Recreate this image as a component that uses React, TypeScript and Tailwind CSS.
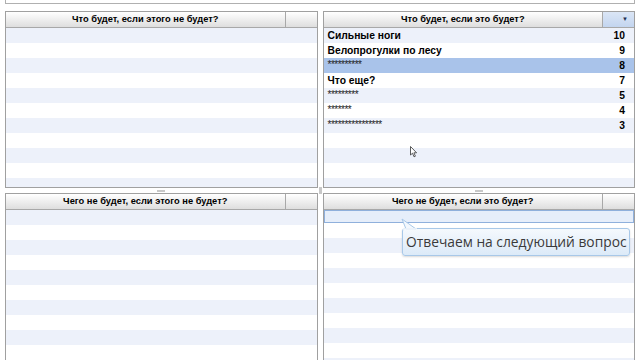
import React from "react";

const rowsTop = [
  { t: "Сильные ноги", n: "10", bold: true },
  { t: "Велопрогулки по лесу", n: "9", bold: true },
  { t: "**********", n: "8", bold: false, sel: true },
  { t: "Что еще?", n: "7", bold: true },
  { t: "*********", n: "5", bold: false },
  { t: "*******", n: "4", bold: false },
  { t: "****************", n: "3", bold: false },
];

function Header({ title, active }: { title: string; active?: boolean }) {
  return (
    <div className="flex h-[16px] shrink-0 border-b border-[#a8a8a8] bg-gradient-to-b from-[#ffffff] to-[#dedede]">
      <div className="flex flex-1 items-center justify-center border-r border-[#a8a8a8] text-[9.3px] font-bold text-black">
        {title}
      </div>
      {active ? (
        <div className="flex w-[31px] items-center justify-end pr-[6px] bg-gradient-to-b from-[#dbe6f6] to-[#c3d5ef] text-[6px] text-[#203050]">
          ▼
        </div>
      ) : (
        <div className="w-[31px]" />
      )}
    </div>
  );
}

function Stripes({ count, start = 0 }: { count: number; start?: number }) {
  return (
    <>
      {Array.from({ length: count }).map((_, i) => (
        <div
          key={i}
          className={`h-[15px] shrink-0 ${(i + start) % 2 === 0 ? "bg-[#edf1fa]" : "bg-white"}`}
        />
      ))}
    </>
  );
}

function Panel({ children }: { children: React.ReactNode }) {
  return (
    <div className="flex flex-1 flex-col overflow-hidden border border-[#a0a0a0] bg-white">{children}</div>
  );
}

export default function App() {
  return (
    <div
      className="relative h-[360px] w-[640px] overflow-hidden bg-white"
      style={{ fontFamily: '"Liberation Sans", Arial, sans-serif' }}
    >
      <div className="mx-[5px] h-[4px] border-x border-b border-[#b0b0b0]" />
      <div className="flex h-[356px] flex-col pl-[5px] pr-[5px] pt-[7px]">
        {/* top row */}
        <div className="flex h-[177px] shrink-0">
          <Panel>
            <Header title="Что будет, если этого не будет?" />
            <Stripes count={12} />
          </Panel>
          <div className="relative w-[5px] shrink-0" />
          <Panel>
            <Header title="Что будет, если это будет?" active />
            {rowsTop.map((r, i) => (
              <div
                key={i}
                className={`flex h-[15px] shrink-0 items-center justify-between pl-[4px] pr-[9px] text-[10.3px] font-bold text-black ${
                  r.sel ? "bg-[#a9c3ea]" : i % 2 === 0 ? "bg-[#edf1fa]" : "bg-white"
                }`}
              >
                <span className={r.bold ? "" : "-mt-[3px] text-[10px] font-normal tracking-[-0.5px] text-[#222]"}>{r.t}</span>
                <span>{r.n}</span>
              </div>
            ))}
            <Stripes count={5} start={1} />
          </Panel>
        </div>
        {/* splitter */}
        <div className="relative flex h-[5px] shrink-0">
          <div className="flex flex-1 items-center justify-center">
            <div className="h-[2px] w-[8px] border-y border-[#c8c8c8]" />
          </div>
          <div className="flex w-[5px] items-center justify-center">
            <div className="h-[7px] w-[3px] bg-[#c8c8c8]" />
          </div>
          <div className="flex flex-1 items-center justify-center">
            <div className="h-[2px] w-[8px] border-y border-[#c8c8c8]" />
          </div>
        </div>
        {/* bottom row */}
        <div className="flex flex-1">
          <Panel>
            <Header title="Чего не будет, если этого не будет?" />
            <Stripes count={11} />
          </Panel>
          <div className="w-[5px] shrink-0" />
          <Panel>
            <Header title="Чего не будет, если это будет?" />
            <div className="h-[13px] shrink-0 border border-[#8fb0dc] bg-[#e6eefa]" />
            <Stripes count={11} start={1} />
          </Panel>
        </div>
      </div>

      {/* tooltip */}
      <div className="absolute left-[402px] top-[228px] flex h-[28px] w-[228px] items-center rounded-[3px] border border-[#a8c8e8] bg-gradient-to-b from-[#f5f9fd] to-[#dceaf8] pl-[3px] shadow-[0_1px_2px_rgba(0,0,0,0.15)]">
        <span className="whitespace-nowrap text-[13.8px] text-[#3a3a3a]" style={{ fontFamily: '"Open Sans", sans-serif' }}>
          Отвечаем на следующий вопрос
        </span>
      </div>
      <svg className="absolute left-[400px] top-[218px]" width="20" height="12" viewBox="0 0 20 12">
        <path d="M2 1 L6 11 L16 11 Z" fill="#f3f8fd" stroke="#a8c8e8" strokeWidth="1" />
        <path d="M3 11 L17 11" stroke="#f5f9fd" strokeWidth="1.5" />
      </svg>

      {/* cursor */}
      <svg className="absolute left-[410px] top-[146px]" width="8" height="12" viewBox="0 0 8 12">
        <path d="M0.5 0.5 L0.5 9 L2.5 7.2 L4 10.8 L5.4 10.2 L3.9 6.8 L6.6 6.8 Z" fill="white" stroke="#333" strokeWidth="0.8" />
      </svg>
    </div>
  );
}
